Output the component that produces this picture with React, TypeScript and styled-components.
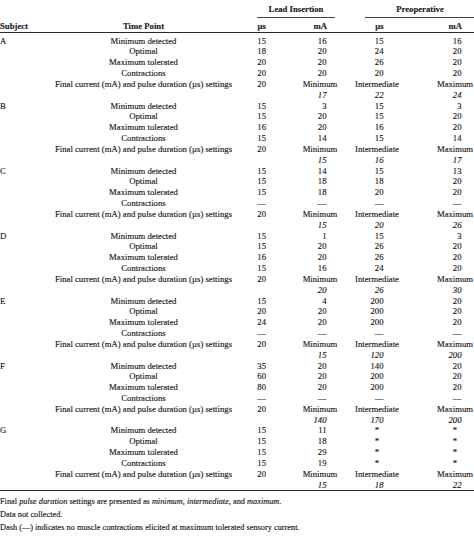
import React from 'react';
import styled, { createGlobalStyle } from 'styled-components';

const GlobalStyle = createGlobalStyle`
  html, body {
    margin: 0;
    padding: 0;
    background: #fff;
  }
  body {
    font-family: "Liberation Serif", "Times New Roman", serif;
    color: #1a1a1a;
    -webkit-text-stroke: 0.15px #1a1a1a;
  }
`;

const Page = styled.div`
  width: 474px;
  height: 539px;
  overflow: hidden;
`;

const Table = styled.table`
  border-collapse: collapse;
  table-layout: fixed;
  width: 505px;
  font-size: 8.7px;
  line-height: 10.83px;
  white-space: nowrap;
`;

const Col = styled.col<{ $w: number }>`
  width: ${p => p.$w}px;
`;

const GroupHead = styled.th<{ $left: number; $right: number }>`
  padding: 4px ${p => p.$right}px 0 ${p => p.$left}px;
  font-weight: bold;
  text-align: center;
`;

const GroupLabel = styled.div`
  padding-bottom: 2px;
  border-bottom: 1px solid #444;
`;

const ColHead = styled.th<{ $align?: 'left' | 'center'; $padRight?: number }>`
  padding: 3px ${p => p.$padRight ?? 0}px 0 0;
  text-align: ${p => p.$align ?? 'center'};
  font-weight: bold;
  border-bottom: 1.5px solid #2a2a2a;
`;

const Body = styled.tbody`
  tr:first-child td {
    padding-top: 3px;
  }
  tr:last-child td {
    border-bottom: 1.5px solid #2a2a2a;
  }
`;

const Cell = styled.td<{ $align?: 'left' | 'center'; $padRight?: number; $italic?: boolean }>`
  padding: 0 ${p => p.$padRight ?? 0}px 0 0;
  text-align: ${p => p.$align ?? 'center'};
  font-style: ${p => (p.$italic ? 'italic' : 'normal')};
`;

const Num = styled.span`
  display: inline-block;
  width: 13px;
  text-align: right;
`;

const Notes = styled.div`
  padding-top: 4px;
  font-size: 8.3px;
  line-height: 13px;
  white-space: nowrap;
`;

const Note = styled.div``;

const labels = [
  'Minimum detected',
  'Optimal',
  'Maximum tolerated',
  'Contractions',
  'Final current (mA) and pulse duration (µs) settings',
];

const finalRow = ['20', 'Minimum', 'Intermediate', 'Maximum'];

type Group = { subject: string; rows: string[][]; italic: string[] };

const groups: Group[] = [
  {
    subject: 'A',
    rows: [['15', '16', '15', '16'], ['18', '20', '24', '20'], ['20', '20', '26', '20'], ['20', '20', '20', '20']],
    italic: ['17', '22', '24'],
  },
  {
    subject: 'B',
    rows: [['15', '3', '15', '3'], ['15', '20', '15', '20'], ['16', '20', '16', '20'], ['15', '14', '15', '14']],
    italic: ['15', '16', '17'],
  },
  {
    subject: 'C',
    rows: [['15', '14', '15', '13'], ['15', '18', '18', '20'], ['15', '18', '20', '20'], ['—', '—', '—', '—']],
    italic: ['15', '20', '26'],
  },
  {
    subject: 'D',
    rows: [['15', '1', '15', '3'], ['15', '20', '26', '20'], ['16', '20', '26', '20'], ['15', '16', '24', '20']],
    italic: ['20', '26', '30'],
  },
  {
    subject: 'E',
    rows: [['15', '4', '200', '20'], ['20', '20', '200', '20'], ['24', '20', '200', '20'], ['—', '—', '—', '—']],
    italic: ['15', '120', '200'],
  },
  {
    subject: 'F',
    rows: [['35', '20', '140', '20'], ['60', '20', '200', '20'], ['80', '20', '200', '20'], ['—', '—', '—', '—']],
    italic: ['140', '170', '200'],
  },
  {
    subject: 'G',
    rows: [['15', '11', '*', '*'], ['15', '18', '*', '*'], ['15', '29', '*', '*'], ['15', '19', '*', '*']],
    italic: ['15', '18', '22'],
  },
];

const Value = ({ v }: { v: string }) =>
  /^(\d+|—)$/.test(v) ? <Num>{v}</Num> : <>{v}</>;

const ValueCells = ({ values, italic }: { values: string[]; italic?: boolean }) => (
  <>
    {values.map((v, i) => (
      <Cell key={i} $padRight={i === 0 ? 9 : 0} $italic={italic}>
        {v ? <Value v={v} /> : null}
      </Cell>
    ))}
  </>
);

const GroupRows = ({ group }: { group: Group }) => (
  <>
    {[...group.rows, finalRow].map((values, i) => (
      <tr key={i}>
        <Cell $align="left">{i === 0 ? group.subject : ''}</Cell>
        <Cell>{labels[i]}</Cell>
        <ValueCells values={values} />
      </tr>
    ))}
    <tr>
      <Cell />
      <Cell />
      <ValueCells values={['', ...group.italic]} italic />
    </tr>
  </>
);

export default function App() {
  return (
    <Page>
      <GlobalStyle />
      <Table>
        <colgroup>
          <Col $w={50} />
          <Col $w={187} />
          <Col $w={54} />
          <Col $w={58} />
          <Col $w={56} />
          <Col $w={100} />
        </colgroup>
        <thead>
          <tr>
            <th />
            <th />
            <GroupHead colSpan={2} $left={20} $right={14}>
              <GroupLabel>Lead Insertion</GroupLabel>
            </GroupHead>
            <GroupHead colSpan={2} $left={16} $right={30}>
              <GroupLabel>Preoperative</GroupLabel>
            </GroupHead>
          </tr>
          <tr>
            <ColHead $align="left">Subject</ColHead>
            <ColHead>Time Point</ColHead>
            <ColHead $padRight={9}>
              <Num>µs</Num>
            </ColHead>
            <ColHead>
              <Num>mA</Num>
            </ColHead>
            <ColHead>
              <Num>µs</Num>
            </ColHead>
            <ColHead>
              <Num>mA</Num>
            </ColHead>
          </tr>
        </thead>
        <Body>
          {groups.map(g => (
            <GroupRows key={g.subject} group={g} />
          ))}
        </Body>
      </Table>
      <Notes>
        <Note>
          Final <i>pulse duration</i> settings are presented as <i>minimum</i>, <i>intermediate</i>, and{' '}
          <i>maximum</i>.
        </Note>
        <Note>Data not collected.</Note>
        <Note>Dash (—) indicates no muscle contractions elicited at maximum tolerated sensory current.</Note>
      </Notes>
    </Page>
  );
}
